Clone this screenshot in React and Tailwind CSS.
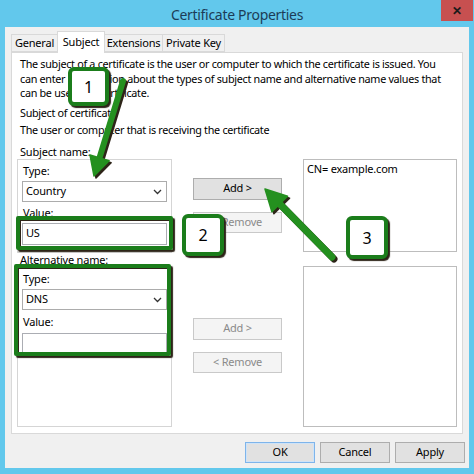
import React from "react";

const FONT = { fontFamily: '"Noto Sans", "Open Sans", sans-serif' };

function Tab({ label, active, w }) {
  if (active) {
    return (
      <div className={`relative z-10 -mb-px flex h-[22px] ${w} items-start justify-center border border-b-0 border-[#d9d9d9] bg-white pt-[2px] text-[11px] tracking-[-0.2px] text-black`}>
        {label}
      </div>
    );
  }
  return (
    <div className={`flex h-[18px] ${w} items-center justify-center border border-[#d9d9d9] bg-[#f0f0f0] text-[11px] tracking-[-0.2px] text-black`}>
      {label}
    </div>
  );
}

function Chevron() {
  return (
    <svg width="9" height="6" viewBox="0 0 9 6" className="mr-[4px]">
      <polyline points="1,1 4.5,4.5 8,1" fill="none" stroke="#333" strokeWidth="1.3" />
    </svg>
  );
}

function Combo({ value }) {
  return (
    <div className="flex h-[21px] items-center justify-between border border-[#acacac] bg-white pl-[3px] text-[11px] text-black">
      <span>{value}</span>
      <Chevron />
    </div>
  );
}

function Field({ value, h = "h-[22px]" }) {
  return (
    <div className={`flex ${h} items-center border border-[#abadb3] bg-white pl-[3px] text-[11px] text-black`}>
      {value}
    </div>
  );
}

function Btn({ children, disabled, className = "" }) {
  return (
    <div
      className={`flex items-center justify-center border text-[11px] ${
        disabled
          ? "border-[#c9c9c9] bg-[#f4f4f4] text-[#8a8a8a]"
          : "border-[#adadad] bg-[#e1e1e1] text-black"
      } ${className}`}
    >
      {children}
    </div>
  );
}

function Marker({ n, className }) {
  return (
    <div
      className={`absolute flex items-center justify-center rounded-[6px] border-[4px] border-[#1b7d1b] bg-white text-[16px] text-black shadow-[2px_2px_1px_#2d2418] ${className}`}
    >
      {n}
    </div>
  );
}

function Highlight({ className }) {
  return (
    <div
      className={`absolute rounded-[2px] border-[4px] border-[#1b7d1b] shadow-[2px_2px_1px_#2d2418,inset_1px_1px_0_#2d2418] ${className}`}
    />
  );
}

function Arrow({ tail, tip, len, half, width }) {
  const dx = tip[0] - tail[0];
  const dy = tip[1] - tail[1];
  const d = Math.hypot(dx, dy);
  const ux = dx / d;
  const uy = dy / d;
  const px = -uy;
  const py = ux;
  const bx = tip[0] - len * ux;
  const by = tip[1] - len * uy;
  const head = `${tip[0]},${tip[1]} ${bx + half * px},${by + half * py} ${bx - half * px},${by - half * py}`;
  const shaft = (color, o) => (
    <g transform={`translate(${o},${o})`}>
      <line x1={tail[0]} y1={tail[1]} x2={bx + ux * 2} y2={by + uy * 2} stroke={color} strokeWidth={width} strokeLinecap="round" />
      <polygon points={head} fill={color} stroke={color} strokeWidth="1.5" strokeLinejoin="round" />
    </g>
  );
  return (
    <g>
      {shaft("#2d2418", 2)}
      {shaft("#24901f", 0)}
    </g>
  );
}

export default function App() {
  return (
    <div className="relative h-[474px] w-[474px] overflow-hidden bg-[#62c8ec]" style={FONT}>
      {/* title bar */}
      <div className="flex h-[27px] items-center justify-center pt-[1px] text-[14px] tracking-[-0.3px] text-[#1c3c57]">
        Certificate Properties
      </div>
      <div className="absolute right-[1px] top-0 flex h-[21px] w-[32px] items-center justify-center bg-[#c75050] text-[12px] font-bold text-[#1a1a1a]">
        ✕
      </div>

      {/* client area */}
      <div className="mx-[5px] flex h-[441px] flex-col bg-[#f0f0f0]">
        {/* tabs */}
        <div className="flex h-[25px] items-end pl-[6px]">
          <Tab label="General" w="w-[47px]" />
          <div className="-ml-px">
            <Tab label="Subject" active w="w-[48px]" />
          </div>
          <div className="-ml-px flex">
            <Tab label="Extensions" w="w-[59px]" />
            <div className="-ml-px">
              <Tab label="Private Key" w="w-[63px]" />
            </div>
          </div>
        </div>

        {/* tab page */}
        <div className="mx-[6px] h-[382px] border border-[#d9d9d9] bg-white pl-[5px] pt-[4px] text-[11px] tracking-[-0.2px] text-black">
          <div className="whitespace-nowrap pl-[3px] text-[10.8px] leading-[14.5px] tracking-[-0.3px]">
            <div>The subject of a certificate is the user or computer to which the certificate is issued. You</div>
            <div>can enter information about the types of subject name and alternative name values that</div>
            <div>can be used in a certificate.</div>
            <div className="mt-[5px]">Subject of certificate</div>
            <div className="mt-[2.5px]">The user or computer that is receiving the certificate</div>
          </div>

          <div className="mt-[7.5px] flex">
            {/* left column */}
            <div className="flex w-[155px] flex-col">
              <div className="h-[14.5px] pl-[3px] leading-[14.5px]">Subject name:</div>
              <div className="h-[94px] border border-[#d5d5d5] px-[4px] pt-[4px]">
                <div className="h-[14.5px] pl-[1px] leading-[14.5px]">Type:</div>
                <div className="mt-[2.5px]"><Combo value="Country" /></div>
                <div className="mt-[3.5px] h-[14.5px] pl-[1px] leading-[14.5px]">Value:</div>
                <div className="mt-[2.5px]"><Field value="US" /></div>
              </div>
              <div className="h-[14px] pl-[3px] leading-[14px]">Alternative name:</div>
              <div className="h-[160px] border border-[#d5d5d5] px-[4px] pt-[4px]">
                <div className="h-[14px] pl-[1px] leading-[14px]">Type:</div>
                <div className="mt-[3px]"><Combo value="DNS" /></div>
                <div className="mt-[5px] h-[14px] pl-[1px] leading-[14px]">Value:</div>
                <div className="mt-[4px]"><Field value="" h="h-[20px]" /></div>
              </div>
            </div>

            {/* middle buttons */}
            <div className="ml-[21px] flex w-[89px] flex-col">
              <Btn className="mt-[33px] h-[22px]">Add &gt;</Btn>
              <Btn disabled className="mt-[12px] h-[21px]">&lt; Remove</Btn>
              <Btn disabled className="mt-[85px] h-[22px]">Add &gt;</Btn>
              <Btn disabled className="mt-[12px] h-[21px]">&lt; Remove</Btn>
            </div>

            {/* right lists */}
            <div className="ml-[21px] flex w-[154px] flex-col">
              <div className="mt-[14.5px] h-[93px] border border-[#bdbdbd] px-[3px] pt-[1px] leading-[16px]">
                CN= example.com
              </div>
              <div className="mt-[14px] h-[161px] border border-[#bdbdbd]" />
            </div>
          </div>
        </div>

        {/* dialog buttons */}
        <div className="flex justify-end gap-[5px] pr-[4px] pt-[8px] tracking-[-0.2px]">
          <div className="flex h-[21px] w-[70px] items-center justify-center border border-[#7eb4ea] bg-[#e1e1e1] text-[11px] text-black shadow-[inset_0_0_0_1px_#cfe3f7]">
            OK
          </div>
          <Btn className="h-[21px] w-[70px]">Cancel</Btn>
          <Btn className="h-[21px] w-[70px]">Apply</Btn>
        </div>
      </div>

      {/* callouts */}
      <Highlight className="left-[16px] top-[216px] h-[34px] w-[157px]" />
      <Highlight className="left-[14px] top-[264px] h-[92px] w-[157px]" />

      <svg className="pointer-events-none absolute left-0 top-0" width="474" height="474">
        <Arrow tail={[123, 81]} tip={[94, 176]} len={19} half={10} width={6} />
        <Arrow tail={[332, 257]} tip={[265, 189]} len={21} half={11} width={7} />
      </svg>

      <Marker n="1" className="left-[68px] top-[67px] h-[39px] w-[41px]" />
      <Marker n="2" className="left-[182px] top-[214px] h-[42px] w-[42px]" />
      <Marker n="3" className="left-[346px] top-[216px] h-[43px] w-[42px]" />
    </div>
  );
}
